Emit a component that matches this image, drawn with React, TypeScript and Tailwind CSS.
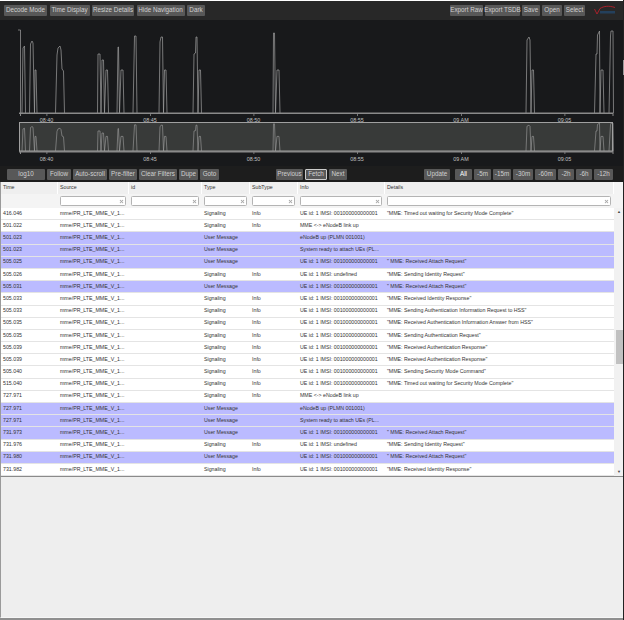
import { X } from "lucide-react";

const topLeft = [
  ["Decode Mode", "w-[43px]"],
  ["Time Display", "w-[40px]"],
  ["Resize Details", "w-[42px]"],
  ["Hide Navigation", "w-[48px]"],
  ["Dark", "w-[18px]"],
];
const topRight = [
  ["Export Raw", "w-[33px]"],
  ["Export TSDB", "w-[35px]"],
  ["Save", "w-[18px]"],
  ["Open", "w-[20px]"],
  ["Select", "w-[21px]"],
];
const tools = [
  ["Follow", "w-[24px]"],
  ["Auto-scroll", "w-[34px]"],
  ["Pre-filter", "w-[28px]"],
  ["Clear Filters", "w-[38px]"],
  ["Dupe", "w-[19px]"],
  ["Goto", "w-[19px]"],
];
const ranges = [
  ["-5m", "w-[17px]"],
  ["-15m", "w-[18px]"],
  ["-30m", "w-[20px]"],
  ["-60m", "w-[21px]"],
  ["-2h", "w-[16px]"],
  ["-6h", "w-[16px]"],
  ["-12h", "w-[19px]"],
];

const ticks = [
  [46.5, "08:40"],
  [150, "08:45"],
  [253.5, "08:50"],
  [357, "08:55"],
  [461, "09 AM"],
  [564.5, "09:05"],
] as const;

// peaks in main chart coordinates, baseline is y=113
const peaks = [
  "18,30 20.5,30 20.5,113",
  "22,113 23,48 24.5,46 25.5,113",
  "29.5,113 30.5,44 32,41 33,43 34.5,113 35,70 36,70 37,113",
  "55.5,113 57,55 58,48 60,46 61,50 62,69 63.5,71 64.5,113",
  "97.5,113 98,54 100,54 101,113 102,60 103.5,60 104.5,113 106,70 107.5,70 108.5,113",
  "117,113 118,47 118.5,47 119.5,113 121,70 123,70 124,113",
  "133,113 134.5,36 136,36 137,113",
  "159,113 160,42 161,37 162.5,37 163.5,113 164.5,70 166,70 167,113",
  "193,113 194,54 195.5,53 196,37 197,37 198,113 199,70 200.5,70 201.5,113",
  "273,113 273.5,33 274.5,33 275.5,113 277,70 279,70 280,113",
  "526,113 527,40 529,37 530,40 531,113 532,70 533.5,70 534.5,113",
  "594.5,113 596,54 597,54 597.5,35 599.5,31 600,113 601,70 603,70 604,113",
  "609,113 610.5,36 611,31 613,31 613.5,113",
];

const columns = "grid-cols-[57px_71px_73px_48px_48px_87px_229px]";

type Row = { time: string; kind: "s" | "u"; sub?: string; info: string; details?: string };

const ueFull = "UE id: 1 IMSI: 001000000000001";

const rows: Row[] = [
  { time: "416.046", kind: "s", info: ueFull, details: '"MME: Timed out waiting for Security Mode Complete"' },
  { time: "501.022", kind: "s", info: "MME <-> eNodeB link up" },
  { time: "501.023", kind: "u", info: "eNodeB up (PLMN 001001)" },
  { time: "501.023", kind: "u", info: "System ready to attach UEs (PL..." },
  { time: "505.025", kind: "u", info: ueFull, details: '" MME: Received Attach Request"' },
  { time: "505.026", kind: "s", info: "UE id: 1 IMSI: undefined", details: '"MME: Sending Identity Request"' },
  { time: "505.031", kind: "u", info: ueFull, details: '" MME: Received Attach Request"' },
  { time: "505.033", kind: "s", info: ueFull, details: '"MME: Received Identity Response"' },
  { time: "505.033", kind: "s", info: ueFull, details: '"MME: Sending Authentication Information Request to HSS"' },
  { time: "505.035", kind: "s", info: ueFull, details: '"MME: Received Authentication Information Answer from HSS"' },
  { time: "505.035", kind: "s", info: ueFull, details: '"MME: Sending Authentication Request"' },
  { time: "505.039", kind: "s", info: ueFull, details: '"MME: Received Authentication Response"' },
  { time: "505.039", kind: "s", info: ueFull, details: '"MME: Received Authentication Response"' },
  { time: "505.040", kind: "s", info: ueFull, details: '"MME: Sending Security Mode Command"' },
  { time: "515.040", kind: "s", info: ueFull, details: '"MME: Timed out waiting for Security Mode Complete"' },
  { time: "727.971", kind: "s", info: "MME <-> eNodeB link up" },
  { time: "727.971", kind: "u", info: "eNodeB up (PLMN 001001)" },
  { time: "727.971", kind: "u", info: "System ready to attach UEs (PL..." },
  { time: "731.973", kind: "u", info: ueFull, details: '" MME: Received Attach Request"' },
  { time: "731.976", kind: "s", info: "UE id: 1 IMSI: undefined", details: '"MME: Sending Identity Request"' },
  { time: "731.980", kind: "u", info: ueFull, details: '" MME: Received Attach Request"' },
  { time: "731.982", kind: "s", info: ueFull, details: '"MME: Received Identity Response"' },
];

function Btn({ label, className }: { label: string; className: string }) {
  return (
    <div className={`flex h-[11px] shrink-0 items-center justify-center whitespace-nowrap rounded-[1px] bg-[#585858] text-[6.3px] text-[#d0d0d0] ${className}`}>
      {label}
    </div>
  );
}

function Charts() {
  return (
    <svg viewBox="0 0 624 146" className="block h-[146px] w-[624px] bg-[#18191b]">
      {/* main plot */}
      <g transform="translate(0,-20)">
        {peaks.map((p) => (
          <polyline key={p} points={p} fill="none" stroke="#a0a0a0" strokeWidth="0.7" />
        ))}
        <rect x="19" y="112.5" width="594" height="1.5" fill="#8a8a8a" />
        <rect x="19.5" y="122.5" width="593" height="28.5" fill="#383a39" stroke="#a0a0a0" />
        <g transform="translate(0,112.6) scale(1,0.34)">
          {peaks.slice(1).map((p) => (
            <polyline key={p} points={p} fill="none" stroke="#a0a0a0" strokeWidth="0.9" />
          ))}
        </g>
        <rect x="19" y="151" width="594" height="1.5" fill="#8a8a8a" />
        <rect x="612.5" y="113" width="1" height="3" fill="#8a8a8a" />
        <rect x="612.5" y="151" width="1" height="3" fill="#8a8a8a" />
        <rect x="20" y="113" width="1" height="3" fill="#8a8a8a" />
        <rect x="20" y="151" width="1" height="3" fill="#8a8a8a" />
        {ticks.map(([x, label]) => (
          <g key={label}>
            <rect x={x} y="113" width="0.8" height="3" fill="#8a8a8a" />
            <rect x={x} y="151" width="0.8" height="3" fill="#8a8a8a" />
            <text x={x} y="121.5" textAnchor="middle" fontSize="5.4" fill="#c0c0c0">{label}</text>
            <text x={x} y="160.5" textAnchor="middle" fontSize="5.4" fill="#c0c0c0">{label}</text>
          </g>
        ))}
      </g>
    </svg>
  );
}

function Logo() {
  return (
    <svg viewBox="0 0 22 12" className="ml-[7px] h-[12px] w-[22px]">
      <path d="M0.5 5 L3 10 L6 4.5 C10 2 15 1.5 21 3.5" fill="none" stroke="#b5202a" strokeWidth="0.9" />
      <rect x="6" y="7" width="15" height="2.5" fill="#24405c" />
    </svg>
  );
}

function FilterInput() {
  return (
    <div className="flex h-[10px] items-center justify-end rounded-[1.5px] border border-[#b4b4b4] bg-white pr-[1px]">
      <X className="h-[5px] w-[5px] text-[#a8a8a8]" strokeWidth={5} />
    </div>
  );
}

export default function App() {
  return (
    <div className="relative flex h-[620px] w-[624px] flex-col overflow-hidden bg-[#eeeeee] font-['Liberation_Sans',sans-serif]">
      <div className="h-[1px] bg-white" />
      {/* top toolbar */}
      <div className="flex h-[19px] items-center bg-[#282828] pl-[4px] pr-[8px] pb-[1px]">
        <div className="flex gap-[2.5px]">
          {topLeft.map(([l, w]) => (
            <Btn key={l} label={l} className={w} />
          ))}
        </div>
        <div className="ml-auto flex items-center gap-[2px]">
          {topRight.map(([l, w]) => (
            <Btn key={l} label={l} className={w} />
          ))}
          <Logo />
        </div>
      </div>

      <Charts />

      {/* table toolbar */}
      <div className="flex h-[16px] items-center bg-[#1d1d1d] pl-[7px]">
        <Btn label="log10" className="mr-[2px] w-[38px] bg-[#6a6a6a]" />
        <div className="flex gap-[2px]">
          {tools.map(([l, w]) => (
            <Btn key={l} label={l} className={w} />
          ))}
        </div>
        <div className="ml-[57px] flex gap-[2px]">
          <Btn label="Previous" className="w-[27px]" />
          <Btn label="Fetch" className="w-[22px] border border-[#cccccc]" />
          <Btn label="Next" className="w-[18px]" />
        </div>
        <Btn label="Update" className="ml-[77px] w-[26px]" />
        <div className="ml-[5px] flex gap-[2px]">
          <Btn label="All" className="w-[17px] bg-[#8e8e8e] text-white" />
          {ranges.map(([l, w]) => (
            <Btn key={l} label={l} className={w} />
          ))}
        </div>
      </div>

      {/* event table */}
      <div className="flex border-b border-b-[#8a8a8a] border-l border-l-[#9a9a9a] bg-white text-[5.25px] text-[#333]">
        <div className="w-[613px] shrink-0">
          <div className={`grid h-[12px] items-center bg-[#efefef] ${columns}`}>
            {["Time", "Source", "id", "Type", "SubType", "Info", "Details"].map((h) => (
              <div key={h} className="flex h-full items-center border-r border-white pl-[2px]">
                {h}
              </div>
            ))}
          </div>
          <div className={`grid h-[14px] items-center bg-[#f4f4f4] ${columns}`}>
            {["", "a", "b", "c", "d", "e", "f"].map((k) => (
              <div key={k} className="pl-[2px] pr-[3px]">
                {k && <FilterInput />}
              </div>
            ))}
          </div>
          {rows.map((r, i) => (
            <div
              key={i}
              className={`grid h-[12.19px] items-center border-b border-b-[#e4e4e4] ${columns} ${r.kind === "u" ? "bg-[#bbbbff] border-b-[#c6c6f4]" : "bg-white"}`}
            >
              <div className="pl-[2px]">{r.time}</div>
              <div className="pl-[2px]">mme/PR_LTE_MME_V_1...</div>
              <div />
              <div className="pl-[2px]">{r.kind === "u" ? "User Message" : "Signaling"}</div>
              <div className="pl-[2px]">{r.kind === "u" ? "" : "Info"}</div>
              <div className="truncate pl-[2px]">{r.info}</div>
              <div className="pl-[2px] whitespace-nowrap">{r.details}</div>
            </div>
          ))}
        </div>
        {/* scrollbar */}
        <div className="flex w-[10px] flex-col bg-[#f1f1f1]">
          <div className="h-[26px] bg-[#f4f4f4]" />
          <div className="flex h-[8px] items-center justify-center text-[4px] text-[#444]">▲</div>
          <div className="h-[114px]" />
          <div className="ml-[2px] mr-[1.5px] h-[34px] bg-[#c1c1c1]" />
          <div className="flex-1" />
          <div className="flex h-[8px] items-center justify-center text-[4px] text-[#444]">▼</div>
        </div>
      </div>
      <div className="flex-1 border-l-[1.5px] border-l-[#9a9a9a] border-b border-b-[#f6f6f6]" />
      <div className="h-[2px] bg-[#8f8f8f]" />

      {/* page scrollbar, one pixel of it shows at the right edge */}
      <div className="absolute bottom-0 right-0 top-0 w-[1px] bg-[#222222]">
        <div className="mt-[60px] h-[15px] bg-[#9a9a9a]" />
      </div>
    </div>
  );
}
